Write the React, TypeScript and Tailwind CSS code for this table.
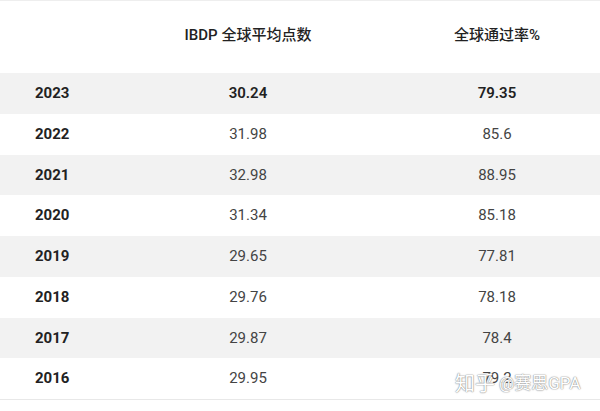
const rows = [
  { year: "2023", avg: "30.24", pass: "79.35", bold: true },
  { year: "2022", avg: "31.98", pass: "85.6" },
  { year: "2021", avg: "32.98", pass: "88.95" },
  { year: "2020", avg: "31.34", pass: "85.18" },
  { year: "2019", avg: "29.65", pass: "77.81" },
  { year: "2018", avg: "29.76", pass: "78.18" },
  { year: "2017", avg: "29.87", pass: "78.4" },
  { year: "2016", avg: "29.95", pass: "79.2" },
];

export default function App() {
  return (
    <div
      className="relative w-[600px] h-[411px] overflow-hidden bg-white text-[15px] text-[#444]"
      style={{ fontFamily: 'Roboto, "Noto Sans CJK SC", sans-serif' }}
    >
      <div className="border-t border-[#eeeeee]">
        <div className="grid grid-cols-[160px_176px_58px_206px] h-[72px] items-center pb-1 font-medium text-[#222]">
          <div />
          <div className="text-center">IBDP 全球平均点数</div>
          <div />
          <div className="text-center">全球通过率%</div>
        </div>
        {rows.map((r, i) => (
          <div
            key={r.year}
            className={`grid grid-cols-[160px_176px_58px_206px] h-[40.75px] items-center ${
              i % 2 === 0 ? "bg-[#f2f2f2]" : "bg-white"
            } ${r.bold ? "font-semibold text-[#222]" : ""}`}
          >
            <div className="pl-[35px] font-bold text-[#222]">{r.year}</div>
            <div className="text-center">{r.avg}</div>
            <div />
            <div className="text-center">{r.pass}</div>
          </div>
        ))}
        <div className="border-t border-[#e8e8e8]" />
      </div>

      {/* watermark */}
      <div className="absolute left-[455px] top-[369px] flex items-center gap-1 text-white [text-shadow:0_0_1.5px_#777,0_0_1px_#999]">
        <span className="text-[20px]">知乎</span>
        <span className="text-[17px]">@赛思GPA</span>
      </div>
    </div>
  );
}
